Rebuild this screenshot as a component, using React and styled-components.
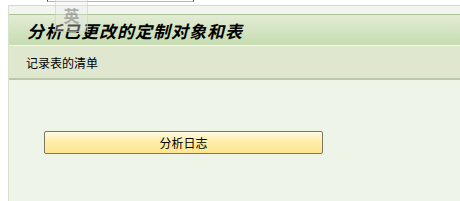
import React from 'react';
import styled, { createGlobalStyle } from 'styled-components';

const GlobalStyle = createGlobalStyle`
    html, body {
        margin: 0;
        padding: 0;
        background: #ffffff;
        font-family: "Noto Sans CJK SC", "Liberation Sans", sans-serif;
    }
`

const Page = styled.div`
    position: relative;
    width: 460px;
    height: 201px;
    padding: 5px 0 0 8px;
    box-sizing: border-box;
    overflow: hidden;
`

const Panel = styled.div`
    height: 100%;
    border-top: 1px solid #d4d8d0;
    border-left: 1px solid #d6e2cc;
    background: #eef4e8;
    display: flex;
    flex-direction: column;
`

const TopStrip = styled.div`
    height: 8px;
    background: #f2f6ee;
`

const TitleBar = styled.div`
    height: 30px;
    border-top: 1px solid #a9c296;
    border-bottom: 1px solid #f4f8ee;
    background: linear-gradient(#e2ecd4, #c6dcb0);
    display: flex;
    align-items: center;
    padding-left: 18px;
`

const Title = styled.h1`
    margin: 0;
    font-size: 17px;
    font-weight: bold;
    font-style: italic;
    letter-spacing: 1px;
    color: #000;
`

const SubBar = styled.div`
    height: 32px;
    background: #dfe7cf;
    border-bottom: 2px solid #b9c9a9;
    display: flex;
    align-items: center;
    padding-left: 17px;
    font-size: 12px;
    color: #000;
`

const Body = styled.div`
    flex: 1;
    padding: 49px 0 0 35px;
`

const LogButton = styled.button`
    width: 279px;
    height: 23px;
    border: 1px solid #7a7668;
    border-radius: 2px;
    background: linear-gradient(#fffbe4, #ffeea8 45%, #ffe590);
    font-family: "Noto Sans CJK SC", "Liberation Sans", sans-serif;
    font-size: 12px;
    color: #000;
    padding: 0;
    cursor: pointer;
`

const FocusedInput = styled.div`
    position: absolute;
    left: 47px;
    top: -20px;
    width: 145px;
    height: 21px;
    border: 1px solid #b01818;
    border-top: none;
    border-bottom: 1px solid #b8b8b8;
`

const ImeBadge = styled.div`
    position: absolute;
    left: 55px;
    top: -2px;
    width: 31px;
    height: 32px;
    border: 1px solid rgba(200, 200, 200, 0.5);
    background: rgba(235, 235, 235, 0.35);
    display: flex;
    align-items: center;
    justify-content: center;
    font-size: 16px;
    font-weight: bold;
    color: rgba(130, 130, 130, 0.6);
`

export default function App() {
    return (
        <Page>
            <GlobalStyle />
            <Panel>
                <TopStrip />
                <TitleBar>
                    <Title>分析已更改的定制对象和表</Title>
                </TitleBar>
                <SubBar>记录表的清单</SubBar>
                <Body>
                    <LogButton>分析日志</LogButton>
                </Body>
            </Panel>
            <FocusedInput />
            <ImeBadge>英</ImeBadge>
        </Page>
    );
}
